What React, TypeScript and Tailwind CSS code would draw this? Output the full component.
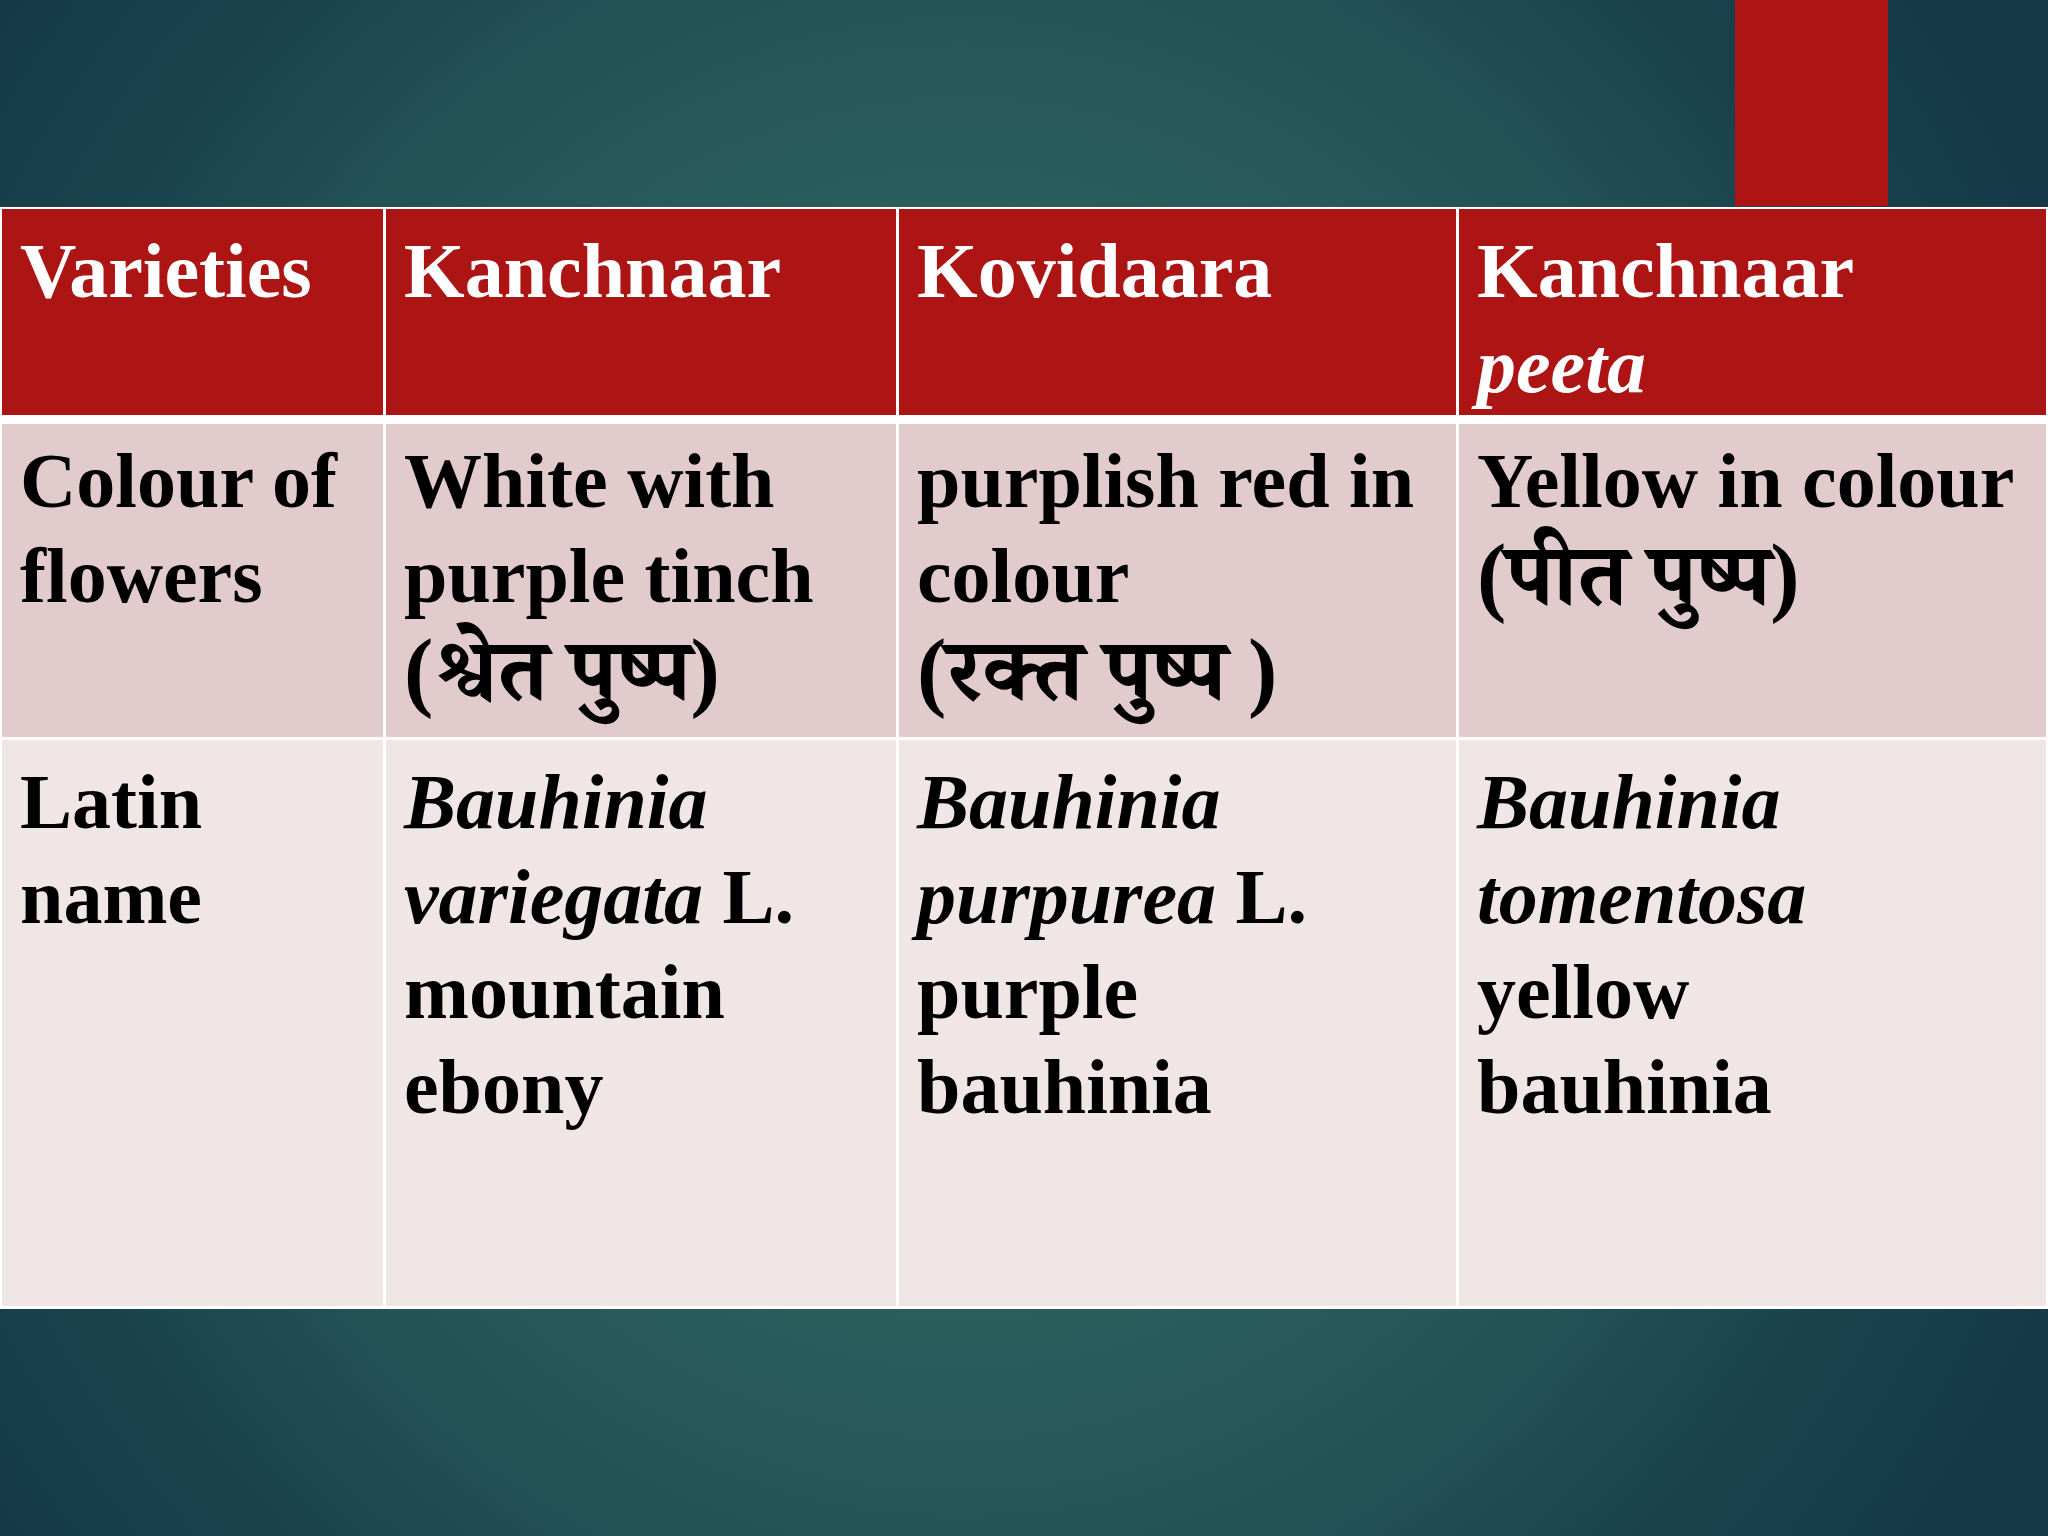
import type { ReactNode } from 'react'

const serif = 'font-["Liberation_Serif","Noto_Serif_Devanagari","Noto_Sans_Devanagari","Lohit_Devanagari","FreeSerif",serif]'

interface CellProps {
  children: ReactNode
  tone: 'head' | 'mid' | 'light'
  pt?: string
}

const Cell = ({ children, tone, pt = 'pt-[14px]' }: CellProps) => {
  const bg =
    tone === 'head'
      ? 'bg-[#ad1515] text-white'
      : tone === 'mid'
        ? 'bg-[#e2cbcc] text-black'
        : 'bg-[#f1e6e6] text-black'
  return (
    <div className={`${bg} pl-[18px] pr-2 ${pt} text-[78px] leading-[95px] font-bold ${serif}`}>
      {children}
    </div>
  )
}

// devanagari runs a bit bigger than the latin text
const Hi = ({ children }: { children: ReactNode }) => (
  <span className="text-[88px] leading-[95px]">{children}</span>
)

const cols = 'grid grid-cols-[381px_510px_557px_1fr] gap-x-[3px]'

export default function App() {
  return (
    <div className="w-[2048px] h-[1536px] flex flex-col bg-[radial-gradient(ellipse_60%_85%_at_47%_50%,#2f6663_0%,#2b605e_40%,#225156_65%,#19414c_82%,#153848_100%)]">
      {/* top strip with red accent bar */}
      <div className="h-[207px] flex pl-[1735px] shrink-0">
        <div className="w-[153px] h-[206px] bg-[#ad1515]" />
      </div>

      {/* table */}
      <div className="bg-white px-[2px] pt-[2px] pb-[3px] flex flex-col">
        <div className={`${cols} h-[206px] mb-[9px]`}>
          <Cell tone="head">Varieties</Cell>
          <Cell tone="head">Kanchnaar</Cell>
          <Cell tone="head">Kovidaara</Cell>
          <Cell tone="head">
            Kanchnaar
            <br />
            <i>peeta</i>
          </Cell>
        </div>

        <div className={`${cols} h-[313px] mb-[3px]`}>
          <Cell tone="mid" pt="pt-[9px]">
            Colour of
            <br />
            flowers
          </Cell>
          <Cell tone="mid" pt="pt-[9px]">
            White with
            <br />
            purple tinch
            <br />
            <Hi>(श्वेत पुष्प)</Hi>
          </Cell>
          <Cell tone="mid" pt="pt-[9px]">
            purplish red in
            <br />
            colour
            <br />
            <Hi>(रक्त पुष्प )</Hi>
          </Cell>
          <Cell tone="mid" pt="pt-[9px]">
            Yellow in colour
            <br />
            <Hi>(पीत पुष्प)</Hi>
          </Cell>
        </div>

        <div className={`${cols} h-[566px]`}>
          <Cell tone="light">
            Latin
            <br />
            name
          </Cell>
          <Cell tone="light">
            <i>Bauhinia</i>
            <br />
            <i>variegata</i> L.
            <br />
            mountain
            <br />
            ebony
          </Cell>
          <Cell tone="light">
            <i>Bauhinia</i>
            <br />
            <i>purpurea</i> L.
            <br />
            purple
            <br />
            bauhinia
          </Cell>
          <Cell tone="light">
            <i>Bauhinia</i>
            <br />
            <i>tomentosa</i>
            <br />
            yellow
            <br />
            bauhinia
          </Cell>
        </div>
      </div>
    </div>
  )
}
